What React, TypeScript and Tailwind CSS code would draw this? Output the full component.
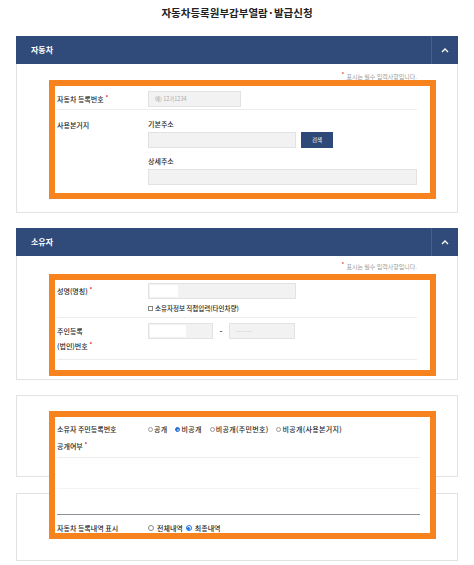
import React from "react"

const font = "font-['Noto_Sans_CJK_KR','Noto_Sans',sans-serif]"

function Req() {
  return <span className="relative -top-[4px] ml-[2px] text-[6px] font-bold text-[#e0202a]">•</span>
}

function Radio({ checked, size = "sm" }: { checked?: boolean; size?: "sm" | "md" }) {
  if (size === "md") {
    return checked ? (
      <span className="inline-flex h-[6px] w-[6px] items-center justify-center rounded-full border border-[#1a73e8] bg-white">
        <span className="h-[3px] w-[3px] rounded-full bg-[#1a73e8]" />
      </span>
    ) : (
      <span className="inline-block h-[6px] w-[6px] rounded-full border border-[#8a8a8a] bg-white" />
    )
  }
  return checked ? (
    <span className="inline-flex h-[5px] w-[5px] items-center justify-center rounded-full border border-[#2a6fd6] bg-[#2a6fd6]">
      <span className="h-[2px] w-[2px] rounded-full bg-[#9cc0f5]" />
    </span>
  ) : (
    <span className="inline-block h-[5px] w-[5px] rounded-full border border-[#999]" />
  )
}

function PanelHeader({ title }: { title: string }) {
  return (
    <div className="flex h-[28px] items-center bg-[#304a79]">
      <span className="flex-1 pl-[15px] text-[8px] font-bold text-white">{title}</span>
      <div className="flex h-full w-[27px] items-center justify-center border-l border-[#465f8c]">
        <svg width="8" height="5" viewBox="0 0 8 5" fill="none">
          <path d="M1 4L4 1L7 4" stroke="white" strokeWidth="1.3" />
        </svg>
      </div>
    </div>
  )
}

function Note() {
  return (
    <div className="flex h-[10px] items-center justify-end text-[6px] leading-[10px] text-[#9a9a9a]">
      <span className="relative -top-[2px] mr-[2px] text-[6px] text-[#e0202a]">*</span>
      표시는 필수 입력사항입니다.
    </div>
  )
}

export default function App() {
  return (
    <div className={`relative min-h-[565px] w-[474px] bg-white text-[#262626] ${font}`}>
      <h1 className="h-[26px] text-center text-[10.5px] font-bold leading-[26px] text-[#222]">
        자동차등록원부갑부열람·발급신청
      </h1>

      <div className="mx-[16px] mt-[10px]">
        {/* 자동차 */}
        <PanelHeader title="자동차" />
        <div className="h-[149px] border-x border-b border-[#e2e2e2] px-[40px] pt-[8px]">
          <Note />
          <div className="mt-[7px] flex items-center border-b border-[#ececec] py-[2px]">
            <div className="w-[91px] text-[7px] font-medium">
              자동차 등록번호
              <Req />
            </div>
            <div className="flex h-[16px] w-[93px] items-center border border-[#e2e2e2] bg-[#f2f2f2] px-[6px] text-[5.5px] text-[#aaa]">
              예) 12가1234
            </div>
          </div>
          <div className="flex pt-[9px]">
            <div className="w-[91px] pt-[1px] text-[7px] font-medium leading-[10px]">사용본거지</div>
            <div className="flex-1">
              <div className="text-[7px] font-medium leading-[10px]">기본주소</div>
              <div className="mt-[3px] flex gap-[5px]">
                <div className="h-[16px] w-[148px] border border-[#e2e2e2] bg-[#f2f2f2]" />
                <button className="h-[16px] w-[32px] bg-[#2e4877] text-[5.5px] text-white">검색</button>
              </div>
              <div className="mt-[8px] text-[7px] font-medium leading-[10px]">상세주소</div>
              <div className="mt-[3px] h-[16px] border border-[#e2e2e2] bg-[#f2f2f2]" />
            </div>
          </div>
        </div>

        {/* 소유자 */}
        <div className="mt-[15px]">
          <PanelHeader title="소유자" />
        </div>
        <div className="h-[124px] border-x border-b border-[#e2e2e2] px-[40px] pt-[6px]">
          <Note />
          <div className="mt-[11px] flex border-b border-[#ececec] pb-[4px]">
            <div className="w-[91px] pt-[1px] text-[7px] font-medium leading-[14px]">
              성명(명칭)
              <Req />
            </div>
            <div>
              <div className="flex h-[16px] w-[148px] items-center border border-[#e2e2e2] bg-[#f2f2f2] px-[1px]">
                <div className="h-[12px] w-[28px] bg-white" />
              </div>
              <div className="mt-[4px] flex h-[10px] items-center gap-[2px] text-[6.5px] font-medium leading-[10px]">
                <span className="inline-block h-[5px] w-[5px] border border-[#888]" />
                소유자정보 직접입력(타인차량)
              </div>
            </div>
          </div>
          <div className="flex border-b border-[#ececec] pb-[5px] pt-[5px]">
            <div className="w-[91px] pt-[1px] text-[7px] font-medium leading-[15px]">
              <div>주인등록</div>
              <div>
                (법인)번호
                <Req />
              </div>
            </div>
            <div className="flex h-[16px] items-center">
              <div className="flex h-[16px] w-[65px] items-center border border-[#e2e2e2] bg-[#f2f2f2] px-[1px]">
                <div className="h-[12px] w-[36px] bg-white" />
              </div>
              <span className="w-[16px] text-center text-[7px] font-bold">-</span>
              <div className="flex h-[16px] w-[66px] items-center border border-[#e2e2e2] bg-[#f2f2f2] px-[5px] text-[6px] tracking-[-1px] text-[#999]">
                ·······
              </div>
            </div>
          </div>
        </div>

        {/* 공개여부 */}
        <div className="mt-[15px] h-[82px] border border-[#e2e2e2]" />

        {/* 등록내역 */}
        <div className="mt-[16px] h-[68px] border border-[#e2e2e2]" />
      </div>

      {/* highlight boxes */}
      <div className="absolute left-[49px] top-[80px] h-[119px] w-[387px] border-[6px] border-[#f7831f]" />
      <div className="absolute left-[49px] top-[274px] h-[102px] w-[387px] border-[6px] border-[#f7831f]" />
      <div className="absolute left-[49px] top-[411px] h-[128px] w-[387px] overflow-hidden border-[6px] border-[#f7831f] bg-white pl-[2px] pr-[10px]">
        <div className="flex border-b border-[#ececec] pb-[2px] pt-[4px]">
          <div className="w-[91px] text-[7px] font-medium leading-[17px]">
            <div>소유자 주민등록번호</div>
            <div>
              공개여부
              <Req />
            </div>
          </div>
          <div className="flex h-[17px] items-center gap-[8px] text-[7px] font-medium tracking-[0.3px]">
            <span className="flex items-center gap-[1px]">
              <Radio />
              공개
            </span>
            <span className="flex items-center gap-[1px]">
              <Radio checked />
              비공개
            </span>
            <span className="flex items-center gap-[1px]">
              <Radio />
              비공개(주민번호)
            </span>
            <span className="flex items-center gap-[1px]">
              <Radio />
              비공개(사용본거지)
            </span>
          </div>
        </div>
        <div className="mt-[30px] border-t border-[#f3f3f3]" />
        <div className="mt-[25px] border-t-[1.5px] border-[#8b9099]" />
        <div className="flex h-[26px] items-center">
          <div className="w-[91px] text-[7px] font-medium">자동차 등록내역 표시</div>
          <div className="flex items-center gap-[3px] text-[7px] font-medium">
            <Radio size="md" />
            <span>전체내역</span>
            <Radio size="md" checked />
            <span>최종내역</span>
          </div>
        </div>
      </div>
    </div>
  )
}
